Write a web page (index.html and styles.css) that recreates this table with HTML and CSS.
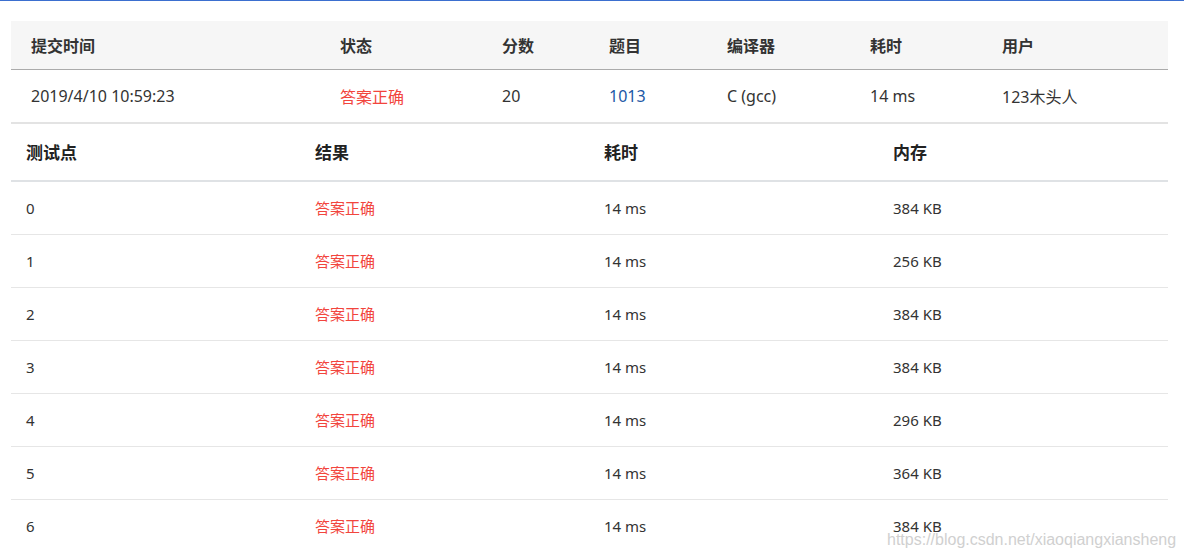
FILE: index.html
```html
<!DOCTYPE html>
<html lang="zh">
<head>
<meta charset="utf-8">
<link rel="stylesheet" href="styles.css">
</head>
<body>
<div class="topbar"></div>
<div class="wrap">
  <table class="sub">
    <colgroup>
      <col style="width:309px"><col style="width:162px"><col style="width:107px"><col style="width:118px"><col style="width:143px"><col style="width:132px"><col>
    </colgroup>
    <thead>
      <tr><th>提交时间</th><th>状态</th><th>分数</th><th>题目</th><th>编译器</th><th>耗时</th><th>用户</th></tr>
    </thead>
    <tbody>
      <tr><td>2019/4/10 10:59:23</td><td class="ok">答案正确</td><td>20</td><td><a class="link">1013</a></td><td>C (gcc)</td><td>14 ms</td><td>123木头人</td></tr>
    </tbody>
  </table>
  <table class="cases">
    <colgroup><col style="width:289px"><col style="width:289px"><col style="width:289px"><col></colgroup>
    <thead>
      <tr><th>测试点</th><th>结果</th><th>耗时</th><th>内存</th></tr>
    </thead>
    <tbody>
      <tr><td>0</td><td class="ok">答案正确</td><td>14 ms</td><td>384 KB</td></tr>
      <tr><td>1</td><td class="ok">答案正确</td><td>14 ms</td><td>256 KB</td></tr>
      <tr><td>2</td><td class="ok">答案正确</td><td>14 ms</td><td>384 KB</td></tr>
      <tr><td>3</td><td class="ok">答案正确</td><td>14 ms</td><td>384 KB</td></tr>
      <tr><td>4</td><td class="ok">答案正确</td><td>14 ms</td><td>296 KB</td></tr>
      <tr><td>5</td><td class="ok">答案正确</td><td>14 ms</td><td>364 KB</td></tr>
      <tr class="last"><td>6</td><td class="ok">答案正确</td><td>14 ms</td><td>384 KB</td></tr>
    </tbody>
  </table>
</div>
<div class="watermark">https://blog.csdn.net/xiaoqiangxiansheng</div>
</body>
</html>
```
FILE: styles.css
```css
html, body {
  margin: 0;
  padding: 0;
  background: #fff;
  font-family: "Noto Sans", "Noto Sans CJK SC", sans-serif;
  color: #333;
  overflow: hidden;
}
.topbar {
  height: 1px;
  background: #3b6fcf;
}
.wrap {
  padding: 20px 16px 0 11px;
}
table {
  border-collapse: collapse;
  width: 1157px;
  table-layout: fixed;
}
.sub th {
  background: #f6f6f6;
  height: 48px;
  padding: 0 0 0 20px;
  text-align: left;
  font-size: 16px;
  font-weight: 700;
  color: #333;
  border-bottom: 1px solid #ababab;
  box-sizing: border-box;
}
.sub td {
  height: 52px;
  padding: 0 0 0 20px;
  font-size: 16px;
  color: #333;
}
.sub td.ok { color: #f2453d; }
.link { color: #1c58a6; text-decoration: none; }
.cases {
  border-top: 2px solid #e3e3e3;
}
.cases th {
  height: 56px;
  padding: 0 0 0 15px;
  text-align: left;
  font-size: 17px;
  font-weight: 700;
  color: #222;
  border-bottom: 2px solid #dfe2e5;
}
.cases td {
  height: 52px;
  padding: 0 0 0 15px;
  font-size: 15px;
  color: #333;
  border-bottom: 1px solid #e6e6e6;
}
.cases tr.last td { border-bottom: none; }
.cases td.ok { color: #f2453d; }
.watermark {
  position: absolute;
  left: 887px;
  top: 531px;
  font-family: "Liberation Sans", Arial, sans-serif;
  font-size: 16px;
  color: #d0d0d0;
  text-shadow: 1px 1px 0 #fff;
}
```
